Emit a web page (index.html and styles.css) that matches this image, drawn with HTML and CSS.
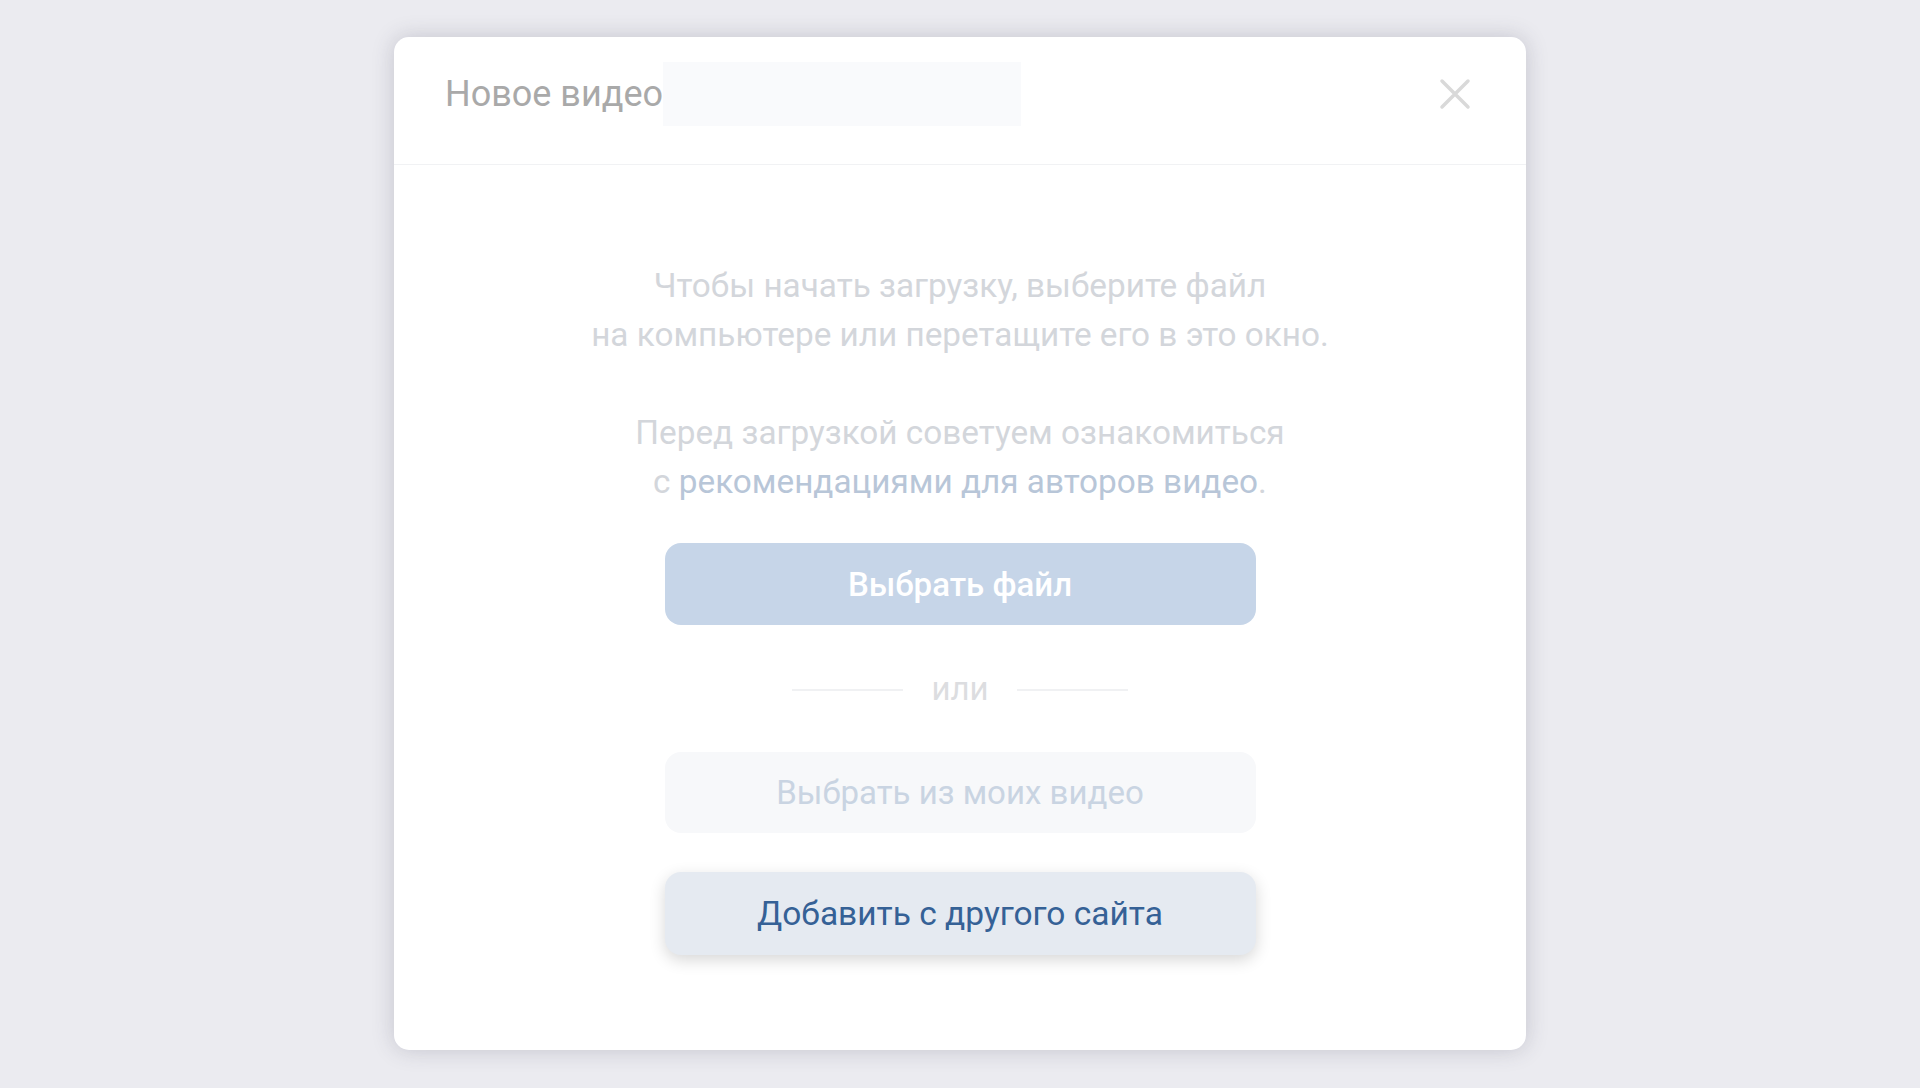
FILE: index.html
```html
<!DOCTYPE html>
<html lang="ru">
<head>
  <meta charset="UTF-8" />
  <title>Новое видео</title>
  <link rel="stylesheet" href="styles.css">
</head>
<body>
  <div class="modal">
    <div class="modal-header">
      <span class="title">Новое видео</span>
      <div class="title-field"></div>
      <button class="close" aria-label="Закрыть">
        <svg width="32" height="32" viewBox="0 0 32 32">
          <path d="M3 3 L29 29 M29 3 L3 29" stroke="#d9d9d9" stroke-width="3.5" stroke-linecap="round" fill="none"/>
        </svg>
      </button>
    </div>
    <div class="modal-body">
      <p class="hint">Чтобы начать загрузку, выберите файл<br>на компьютере или перетащите его в это окно.</p>
      <p class="hint second">Перед загрузкой советуем ознакомиться<br>с <a href="#">рекомендациями для авторов видео</a>.</p>
      <button class="btn btn-primary">Выбрать файл</button>
      <div class="divider">или</div>
      <button class="btn btn-light">Выбрать из моих видео</button>
      <button class="btn btn-accent">Добавить с другого сайта</button>
    </div>
  </div>
</body>
</html>
```

FILE: styles.css
```css
body {
  margin: 0;
  background: #ebebf0;
  font-family: Roboto, "Noto Sans", sans-serif;
  height: 1088px;
  overflow: hidden;
}
.modal {
  width: 1132px;
  height: 1013px;
  margin: 37px auto 0;
  background: #fff;
  border-radius: 15px;
  box-shadow: 0 0 22px rgba(60, 60, 80, 0.22);
}
.modal-header {
  display: flex;
  align-items: center;
  padding: 25px 55px 38px 51px;
  border-bottom: 1px solid #f1f2f4;
}
.title {
  font-size: 36px;
  line-height: 64px;
  color: #a9a9a9;
  white-space: nowrap;
}
.title-field {
  width: 358px;
  height: 64px;
  background: #f9fafc;
}
.close {
  margin-left: auto;
  background: none;
  border: none;
  padding: 0;
  width: 32px;
  height: 32px;
}
.modal-body {
  display: flex;
  flex-direction: column;
  align-items: center;
  padding-top: 96px;
}
.hint {
  margin: 0;
  font-size: 33.3px;
  line-height: 49px;
  color: #d3d6db;
  text-align: center;
}
.hint.second {
  margin-top: 49px;
}
.hint a {
  color: #b8c6d8;
  text-decoration: none;
}
.btn {
  width: 591px;
  height: 82px;
  border: none;
  border-radius: 16px;
  font-family: inherit;
  font-size: 33px;
}
.btn-primary {
  margin-top: 37px;
  background: #c6d5e8;
  color: #fff;
  font-weight: 500;
}
.divider {
  display: flex;
  align-items: center;
  justify-content: center;
  gap: 28px;
  height: 40px;
  margin: 43px 0 44px;
  font-size: 33px;
  color: #dcdde0;
}
.divider::before,
.divider::after {
  content: "";
  width: 111px;
  height: 2px;
  margin-top: 3px;
  background: #f0f1f3;
}
.btn-light {
  background: #f7f8fa;
  color: #c9d4e2;
  height: 81px;
}
.btn-accent {
  margin-top: 39px;
  height: 83px;
  background: #e5eaf1;
  color: #356196;
  font-size: 33.5px;
  box-shadow: 0 5px 16px rgba(0, 0, 0, 0.16);
}
```
